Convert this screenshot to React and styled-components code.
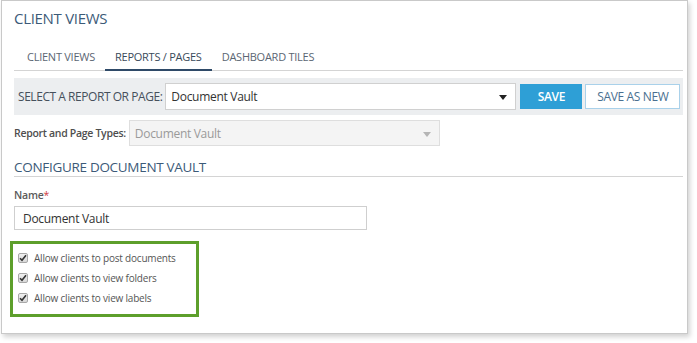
import React from "react";
import styled, { createGlobalStyle } from "styled-components";

const Global = createGlobalStyle`
  html, body { margin: 0; padding: 0; background: #fff; }
  body { font-family: "Open Sans", "Noto Sans", sans-serif; }
  * { box-sizing: border-box; }
`;

const Page = styled.div`
  width: 697px;
  height: 343px;
  padding: 0 0 0 1px;
`;

const Panel = styled.div`
  width: 687px;
  height: 334px;
  border: 1px solid #c9c9c9;
  box-shadow: 2px 3px 5px rgba(0, 0, 0, 0.18);
  padding: 7px 4px 0 12px;
  display: flex;
  flex-direction: column;
`;

const Title = styled.h1`
  margin: 0;
  font-size: 15px;
  font-weight: 400;
  color: #3c5a78;
  letter-spacing: -0.3px;
  line-height: 21px;
`;

const Tabs = styled.div`
  margin-top: 20px;
  display: flex;
  border-bottom: 1px solid #d4d4d4;
  padding-left: 3px;
`;

const Tab = styled.div`
  font-size: 11px;
  letter-spacing: -0.25px;
  color: ${(p) => (p.$active ? "#3a4a5a" : "#5b6673")};
  padding: 0 10px 5px;
  line-height: 15px;
  white-space: nowrap;
  border-bottom: 2px solid ${(p) => (p.$active ? "#2f4a68" : "transparent")};
  margin-bottom: -1px;
`;

const SelectBar = styled.div`
  margin-top: 7px;
  background: #eceef0;
  height: 37px;
  display: flex;
  align-items: center;
  padding: 0 3px 0 4px;
`;

const BarLabel = styled.span`
  font-size: 12px;
  letter-spacing: -0.45px;
  color: #46505c;
  margin-right: 3px;
  white-space: nowrap;
`;

const SelectBox = styled.div`
  width: 351px;
  height: 27px;
  flex-shrink: 0;
  background: #fff;
  border: 1px solid #d0d0d0;
  display: flex;
  align-items: center;
  justify-content: space-between;
  padding: 0 8px 0 5px;
  font-size: 12px;
  letter-spacing: -0.3px;
  color: ${(p) => (p.$disabled ? "#9a9a9a" : "#333")};
  ${(p) => p.$disabled && `background: #f4f4f4; border-color: #dedede; width: 311px; height: 26px;`}
`;

const Arrow = styled.span`
  width: 0;
  height: 0;
  border-left: 4px solid transparent;
  border-right: 4px solid transparent;
  border-top: 5px solid ${(p) => (p.$light ? "#b5b5b5" : "#222")};
  margin-top: 2px;
`;

const Button = styled.button`
  height: 25px;
  flex-shrink: 0;
  white-space: nowrap;
  margin-left: ${(p) => (p.$gap ? "3px" : "4px")};
  width: ${(p) => (p.$primary ? "62px" : "95px")};
  padding: 0;
  font-family: inherit;
  font-size: 12px;
  letter-spacing: -0.35px;
  font-weight: ${(p) => (p.$primary ? 600 : 400)};
  background: ${(p) => (p.$primary ? "#2e9fd6" : "#fff")};
  color: ${(p) => (p.$primary ? "#fff" : "#4a6f90")};
  border: 1px solid ${(p) => (p.$primary ? "#2e9fd6" : "#a9d1ea")};
  cursor: pointer;
`;

const TypeRow = styled.div`
  margin-top: 5px;
  display: flex;
  align-items: center;
`;

const BoldLabel = styled.span`
  font-size: 10.5px;
  font-weight: 600;
  letter-spacing: -0.3px;
  color: #4e4e4e;
  margin-right: 3px;
`;

const SectionTitle = styled.h2`
  margin: 12px 0 0;
  font-size: 13.5px;
  font-weight: 400;
  color: #3c5a78;
  letter-spacing: -0.3px;
  line-height: 18px;
  border-bottom: 1px solid #d4d4d4;
  padding-bottom: 0;
`;

const FieldLabel = styled.div`
  margin-top: 11px;
  font-size: 10.5px;
  font-weight: 600;
  letter-spacing: -0.2px;
  color: #5a5a5a;
  line-height: 14px;
`;

const Req = styled.span`
  color: #d04040;
  font-weight: 400;
`;

const TextInput = styled.div`
  margin-top: 4px;
  width: 353px;
  height: 24px;
  border: 1px solid #cfcfcf;
  display: flex;
  align-items: center;
  padding-left: 8px;
  font-size: 12px;
  letter-spacing: -0.3px;
  color: #333;
`;

const Highlight = styled.div`
  margin: 11px 0 0 -4px;
  width: 189px;
  height: 76px;
  border: 3px solid #5d9f2b;
  padding: 7px 0 0 5px;
  display: flex;
  flex-direction: column;
  gap: 5px;
`;

const CheckRow = styled.label`
  display: flex;
  align-items: center;
  font-size: 10px;
  letter-spacing: -0.2px;
  color: #555;
  line-height: 15px;
`;

const Box = styled.span`
  width: 10px;
  height: 10px;
  border: 1px solid #a8a8a8;
  background: linear-gradient(#f0f0f0, #d8d8d8);
  border-radius: 2px;
  margin-right: 6px;
  display: inline-flex;
  align-items: center;
  justify-content: center;
  position: relative;
  top: -1px;
`;

const Check = () => (
  <svg width="8" height="8" viewBox="0 0 8 8">
    <path d="M1 4.2 L3 6.3 L7 1.2" fill="none" stroke="#333" strokeWidth="1.6" />
  </svg>
);

export default function App() {
  return (
    <Page>
      <Global />
      <Panel>
        <Title>CLIENT VIEWS</Title>
        <Tabs>
          <Tab>CLIENT VIEWS</Tab>
          <Tab $active>REPORTS / PAGES</Tab>
          <Tab>DASHBOARD TILES</Tab>
        </Tabs>
        <SelectBar>
          <BarLabel>SELECT A REPORT OR PAGE:</BarLabel>
          <SelectBox>
            Document Vault
            <Arrow />
          </SelectBox>
          <Button $primary>SAVE</Button>
          <Button $gap>SAVE AS NEW</Button>
        </SelectBar>
        <TypeRow>
          <BoldLabel>Report and Page Types:</BoldLabel>
          <SelectBox $disabled>
            Document Vault
            <Arrow $light />
          </SelectBox>
        </TypeRow>
        <SectionTitle>CONFIGURE DOCUMENT VAULT</SectionTitle>
        <FieldLabel>
          Name<Req>*</Req>
        </FieldLabel>
        <TextInput>Document Vault</TextInput>
        <Highlight>
          {["Allow clients to post documents", "Allow clients to view folders", "Allow clients to view labels"].map(
            (t) => (
              <CheckRow key={t}>
                <Box>
                  <Check />
                </Box>
                {t}
              </CheckRow>
            )
          )}
        </Highlight>
      </Panel>
    </Page>
  );
}
